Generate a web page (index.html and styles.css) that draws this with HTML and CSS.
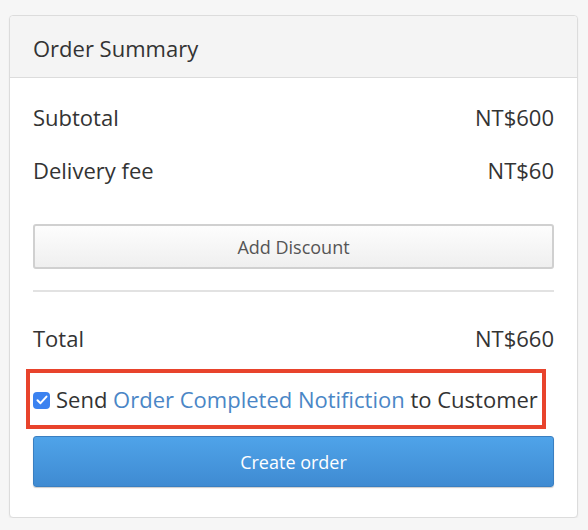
FILE: index.html
```html
<!DOCTYPE html>
<html>
<head>
<meta charset="utf-8">
<link rel="stylesheet" href="styles.css">
</head>
<body>
<div class="card">
  <div class="card-header">Order Summary</div>
  <div class="card-body">
    <div class="row"><span>Subtotal</span><span>NT$600</span></div>
    <div class="row"><span>Delivery fee</span><span>NT$60</span></div>
    <button class="btn btn-default">Add Discount</button>
    <div class="divider"></div>
    <div class="row"><span>Total</span><span>NT$660</span></div>
    <label class="notify">
      <span class="check"><svg width="12" height="10" viewBox="0 0 12 10"><path d="M1.5 5.2 L4.5 8.2 L10.5 1.6" fill="none" stroke="#fff" stroke-width="2" stroke-linecap="round" stroke-linejoin="round"/></svg></span>
      <span>Send <a class="link">Order Completed Notifiction</a> to Customer</span>
    </label>
    <button class="btn btn-primary">Create order</button>
  </div>
</div>
</body>
</html>
```

FILE: styles.css
```css
html, body {
  margin: 0;
  padding: 0;
  background: #f6f6f6;
}
body {
  font-family: "Open Sans", "Liberation Sans", sans-serif;
  color: #333;
  padding-top: 15px;
}
.card {
  margin: 0 10px 0 9px;
  background: #fff;
  border: 1px solid #dcdcdc;
  border-radius: 4px;
  box-shadow: 0 1px 2px rgba(0,0,0,0.06);
}
.card-header {
  display: flex;
  align-items: center;
  padding-left: 23px;
  padding-top: 2px;
  box-sizing: border-box;
  height: 62px;
  background: #f4f4f4;
  border-bottom: 1px solid #dcdcdc;
  border-radius: 4px 4px 0 0;
  font-size: 22px;
}
.card-body {
  padding: 12px 23px 30px 23px;
  display: flex;
  flex-direction: column;
}
.row {
  height: 53px;
  display: flex;
  align-items: center;
  justify-content: space-between;
  font-size: 22px;
}
.btn {
  font-family: "Open Sans", "Liberation Sans", sans-serif;
  font-size: 18px;
  border-radius: 3px;
  width: 100%;
  cursor: pointer;
}
.btn-default {
  margin-top: 28px;
  height: 45px;
  color: #555;
  border: 2px solid #d0d0d0;
  background: linear-gradient(#fdfdfd, #efefef);
}
.divider {
  margin-top: 21px;
  height: 2px;
  background: #e2e2e2;
  margin-bottom: 19px;
}
.notify {
  margin-top: 5px;
  margin-left: -7px;
  width: 520px;
  box-sizing: border-box;
  height: 60px;
  border: 4px solid #e8432c;
  display: flex;
  align-items: center;
  padding-left: 3px;
  font-size: 22px;
  white-space: nowrap;
}
.check {
  width: 17px;
  height: 17px;
  border-radius: 4px;
  background: #3b82f0;
  display: flex;
  align-items: center;
  justify-content: center;
  margin-right: 6px;
  margin-top: 2px;
  flex: none;
}
.link {
  color: #4a86c6;
}
.btn-primary {
  margin-top: 7px;
  height: 51px;
  color: #fff;
  border: 1px solid #3a7fc1;
  background: linear-gradient(#4fa3e9, #3f8bd2);
  box-shadow: 0 1px 1px rgba(0,0,0,0.2);
}
```
